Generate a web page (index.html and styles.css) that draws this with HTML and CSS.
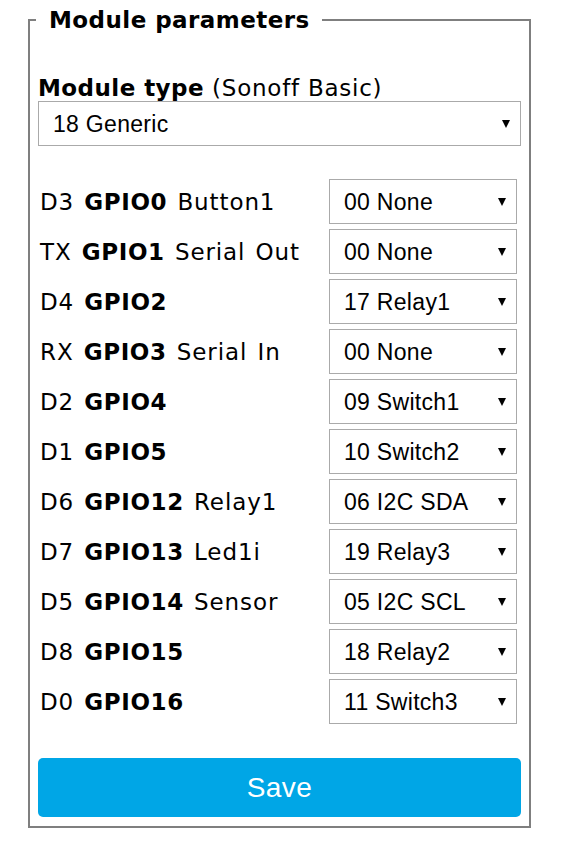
FILE: index.html
```html
<!DOCTYPE html>
<html>
<head>
  <meta charset="UTF-8">
  <title>Module parameters</title>
  <link rel="stylesheet" href="styles.css">
</head>
<body>
  <fieldset class="module">
    <legend class="module-legend">Module parameters</legend>
    <form class="module-form">
      <label class="type-label" for="moduleType"><b>Module type</b> (Sonoff Basic)</label>
      <div class="select-wrap">
        <select id="moduleType" class="select">
          <option>18 Generic</option>
        </select>
      </div>

      <div class="gpio-list">
        <div class="gpio-row">
          <span class="gpio-name">D3 <b>GPIO0</b> Button1</span>
          <div class="select-wrap gpio-select"><select class="select"><option>00 None</option></select></div>
        </div>
        <div class="gpio-row">
          <span class="gpio-name">TX <b>GPIO1</b> Serial Out</span>
          <div class="select-wrap gpio-select"><select class="select"><option>00 None</option></select></div>
        </div>
        <div class="gpio-row">
          <span class="gpio-name">D4 <b>GPIO2</b></span>
          <div class="select-wrap gpio-select"><select class="select"><option>17 Relay1</option></select></div>
        </div>
        <div class="gpio-row">
          <span class="gpio-name">RX <b>GPIO3</b> Serial In</span>
          <div class="select-wrap gpio-select"><select class="select"><option>00 None</option></select></div>
        </div>
        <div class="gpio-row">
          <span class="gpio-name">D2 <b>GPIO4</b></span>
          <div class="select-wrap gpio-select"><select class="select"><option>09 Switch1</option></select></div>
        </div>
        <div class="gpio-row">
          <span class="gpio-name">D1 <b>GPIO5</b></span>
          <div class="select-wrap gpio-select"><select class="select"><option>10 Switch2</option></select></div>
        </div>
        <div class="gpio-row">
          <span class="gpio-name">D6 <b>GPIO12</b> Relay1</span>
          <div class="select-wrap gpio-select"><select class="select"><option>06 I2C SDA</option></select></div>
        </div>
        <div class="gpio-row">
          <span class="gpio-name">D7 <b>GPIO13</b> Led1i</span>
          <div class="select-wrap gpio-select"><select class="select"><option>19 Relay3</option></select></div>
        </div>
        <div class="gpio-row">
          <span class="gpio-name">D5 <b>GPIO14</b> Sensor</span>
          <div class="select-wrap gpio-select"><select class="select"><option>05 I2C SCL</option></select></div>
        </div>
        <div class="gpio-row">
          <span class="gpio-name">D8 <b>GPIO15</b></span>
          <div class="select-wrap gpio-select"><select class="select"><option>18 Relay2</option></select></div>
        </div>
        <div class="gpio-row">
          <span class="gpio-name">D0 <b>GPIO16</b></span>
          <div class="select-wrap gpio-select"><select class="select"><option>11 Switch3</option></select></div>
        </div>
      </div>

      <button type="button" class="save-button">Save</button>
    </form>
  </fieldset>
</body>
</html>
```

FILE: styles.css
```css
body {
  margin: 0;
  background-color: #fff;
  color: #000;
  font-family: "DejaVu Sans", Verdana, sans-serif;
  font-size: 23px;
  letter-spacing: 0.9px;
}

b {
  letter-spacing: 0.6px;
}

.module {
  width: 503px;
  box-sizing: border-box;
  margin: 7px 0 0 28px;
  padding: 0 8px 9px;
  border: 2px solid #7f7f7f;
  min-width: 0;
}

.module-legend {
  margin-left: -2px;
  padding: 0 12px 0 13px;
  font-weight: bold;
  line-height: 26px;
  letter-spacing: 0.45px;
}

.type-label {
  display: block;
  margin-top: 42px;
  line-height: 26px;
  letter-spacing: 0.75px;
}

.type-label b {
  letter-spacing: 0.45px;
}

.select-wrap {
  position: relative;
}

.select-wrap::after {
  content: "";
  position: absolute;
  right: 11px;
  top: 50%;
  margin-top: -4px;
  border-left: 4px solid transparent;
  border-right: 4px solid transparent;
  border-top: 8px solid #000;
  pointer-events: none;
}

.select {
  -webkit-appearance: none;
  appearance: none;
  display: block;
  width: 100%;
  height: 45px;
  box-sizing: border-box;
  margin: 0;
  padding: 0 0 0 14px;
  border: 1px solid #aaa;
  border-radius: 0;
  background-color: #fff;
  color: #000;
  font-family: "Liberation Sans", Arial, sans-serif;
  font-size: 23px;
  letter-spacing: 0.3px;
}

.gpio-list {
  display: flex;
  flex-direction: column;
  gap: 5px;
  margin-top: 33px;
}

.gpio-row {
  display: flex;
  justify-content: space-between;
  align-items: center;
  padding: 0 4px 0 2px;
}

.gpio-name {
  line-height: 26px;
  word-spacing: 2px;
}

.gpio-select {
  width: 188px;
}

.save-button {
  display: block;
  width: 100%;
  height: 59px;
  margin-top: 34px;
  border: none;
  border-radius: 5px;
  background-color: #00a6e6;
  color: #fff;
  font-family: "Liberation Sans", Arial, sans-serif;
  font-size: 28px;
  letter-spacing: 0.4px;
  cursor: pointer;
}
```
